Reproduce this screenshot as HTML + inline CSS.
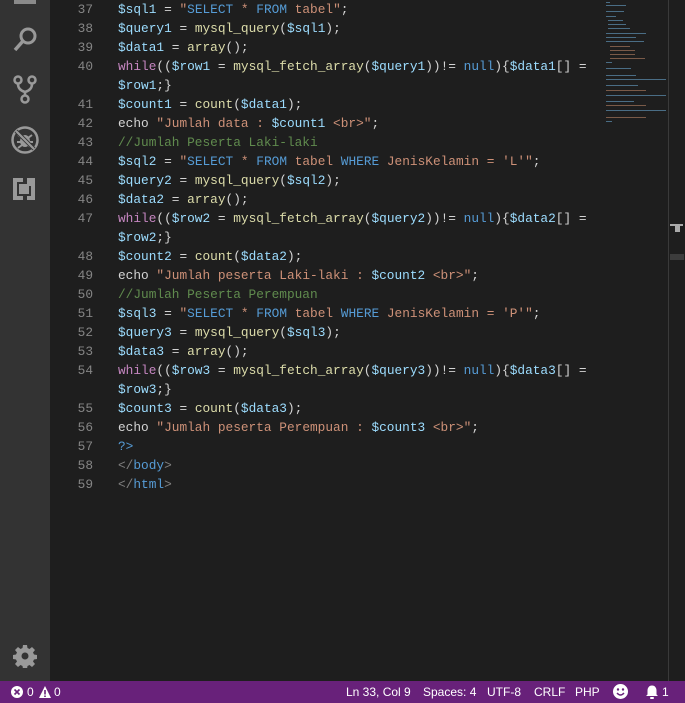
<!DOCTYPE html>
<html><head><style>
body{margin:0;width:685px;height:703px;background:#1e1e1e;overflow:hidden;position:relative;font-family:"Liberation Mono",monospace}
#act{position:absolute;left:0;top:0;width:50px;height:681px;background:#333}
.r{position:absolute;height:19px;line-height:19px;font-size:12.8px;white-space:pre;color:#d4d4d4}
.n{position:absolute;width:40px;left:53px;text-align:right;color:#858585;font-size:12.8px;line-height:19px;height:19px}
.v{color:#9cdcfe}.s{color:#ce9178}.k{color:#569cd6}.p{color:#c586c0}.f{color:#dcdcaa}.c{color:#608b4e}.g{color:#808080}
#status{position:absolute;left:0;top:681px;width:685px;height:22px;background:#68217a;color:#fff;font-family:"Liberation Sans",sans-serif;font-size:12px;line-height:22px}
#status span,#status svg{position:absolute;top:0}
</style></head><body>
<div id="act">
<div style="position:absolute;left:14px;top:-10px;width:22px;height:14px;background:#8a8a8a"></div>
<svg style="position:absolute;left:10px;top:24px" width="30" height="30"><circle cx="18" cy="12" r="7" fill="none" stroke="#999" stroke-width="3"/><line x1="13" y1="17" x2="5" y2="26" stroke="#999" stroke-width="3.5"/></svg>
<svg style="position:absolute;left:10px;top:74px" width="30" height="30"><circle cx="8" cy="6" r="3.5" fill="none" stroke="#999" stroke-width="2.5"/><circle cx="22" cy="6" r="3.5" fill="none" stroke="#999" stroke-width="2.5"/><circle cx="15" cy="25" r="3.5" fill="none" stroke="#999" stroke-width="2.5"/><path d="M8 10 Q8 16 15 18 Q22 16 22 10 M15 18 V21" fill="none" stroke="#999" stroke-width="2.5"/></svg>
<svg style="position:absolute;left:10px;top:125px" width="30" height="30"><circle cx="15" cy="15" r="12.5" fill="none" stroke="#999" stroke-width="2.5"/><ellipse cx="15" cy="16" rx="5" ry="6" fill="#999"/><path d="M8 10l4 3M22 10l-4 3M7 17h4M19 17h4M8 23l4-3M22 23l-4-3" stroke="#999" stroke-width="2"/><line x1="6" y1="6" x2="24" y2="24" stroke="#333" stroke-width="4"/><line x1="6" y1="6" x2="24" y2="24" stroke="#999" stroke-width="2.2"/></svg>
<svg style="position:absolute;left:13px;top:178px" width="24" height="24"><path d="M0 0h10v4H4v14h6v4H0zM14 0h8v22h-8v-4h4V8h-4z" fill="#999"/><rect x="6" y="6" width="10" height="10" fill="#999"/></svg>
<svg style="position:absolute;left:13px;top:644px" width="24" height="24" viewBox="0 0 24 24"><path fill="#999" d="M10 1h4l.5 3 2 1 2.5-2 3 3-2 2.5 1 2 3 .5v4l-3 .5-1 2 2 2.5-3 3-2.5-2-2 1-.5 3h-4l-.5-3-2-1-2.5 2-3-3 2-2.5-1-2-3-.5v-4l3-.5 1-2-2-2.5 3-3 2.5 2 2-1z"/><circle cx="12" cy="12" r="3.5" fill="#333"/></svg>
</div>
<div class="n" style="top:0">37</div><div class="r" style="left:118px;top:0"><span class="v">$sql1</span> = <span class="s">"</span><span class="k">SELECT</span> <span class="s">*</span> <span class="k">FROM</span> <span class="s">tabel"</span>;</div>
<div class="n" style="top:19px">38</div><div class="r" style="left:118px;top:19px"><span class="v">$query1</span> = <span class="f">mysql_query</span>(<span class="v">$sql1</span>);</div>
<div class="n" style="top:38px">39</div><div class="r" style="left:118px;top:38px"><span class="v">$data1</span> = <span class="f">array</span>();</div>
<div class="n" style="top:57px">40</div><div class="r" style="left:118px;top:57px"><span class="p">while</span>((<span class="v">$row1</span> = <span class="f">mysql_fetch_array</span>(<span class="v">$query1</span>))!= <span class="k">null</span>){<span class="v">$data1</span>[] =</div>
<div class="r" style="left:118px;top:76px"><span class="v">$row1</span>;}</div>
<div class="n" style="top:95px">41</div><div class="r" style="left:118px;top:95px"><span class="v">$count1</span> = <span class="f">count</span>(<span class="v">$data1</span>);</div>
<div class="n" style="top:114px">42</div><div class="r" style="left:118px;top:114px">echo <span class="s">"Jumlah data : </span><span class="v">$count1</span><span class="s"> &lt;br&gt;"</span>;</div>
<div class="n" style="top:133px">43</div><div class="r" style="left:118px;top:133px"><span class="c">//Jumlah Peserta Laki-laki</span></div>
<div class="n" style="top:152px">44</div><div class="r" style="left:118px;top:152px"><span class="v">$sql2</span> = <span class="s">"</span><span class="k">SELECT</span> <span class="s">*</span> <span class="k">FROM</span> <span class="s">tabel</span> <span class="k">WHERE</span> <span class="s">JenisKelamin = 'L'"</span>;</div>
<div class="n" style="top:171px">45</div><div class="r" style="left:118px;top:171px"><span class="v">$query2</span> = <span class="f">mysql_query</span>(<span class="v">$sql2</span>);</div>
<div class="n" style="top:190px">46</div><div class="r" style="left:118px;top:190px"><span class="v">$data2</span> = <span class="f">array</span>();</div>
<div class="n" style="top:209px">47</div><div class="r" style="left:118px;top:209px"><span class="p">while</span>((<span class="v">$row2</span> = <span class="f">mysql_fetch_array</span>(<span class="v">$query2</span>))!= <span class="k">null</span>){<span class="v">$data2</span>[] =</div>
<div class="r" style="left:118px;top:228px"><span class="v">$row2</span>;}</div>
<div class="n" style="top:247px">48</div><div class="r" style="left:118px;top:247px"><span class="v">$count2</span> = <span class="f">count</span>(<span class="v">$data2</span>);</div>
<div class="n" style="top:266px">49</div><div class="r" style="left:118px;top:266px">echo <span class="s">"Jumlah peserta Laki-laki : </span><span class="v">$count2</span><span class="s"> &lt;br&gt;"</span>;</div>
<div class="n" style="top:285px">50</div><div class="r" style="left:118px;top:285px"><span class="c">//Jumlah Peserta Perempuan</span></div>
<div class="n" style="top:304px">51</div><div class="r" style="left:118px;top:304px"><span class="v">$sql3</span> = <span class="s">"</span><span class="k">SELECT</span> <span class="s">*</span> <span class="k">FROM</span> <span class="s">tabel</span> <span class="k">WHERE</span> <span class="s">JenisKelamin = 'P'"</span>;</div>
<div class="n" style="top:323px">52</div><div class="r" style="left:118px;top:323px"><span class="v">$query3</span> = <span class="f">mysql_query</span>(<span class="v">$sql3</span>);</div>
<div class="n" style="top:342px">53</div><div class="r" style="left:118px;top:342px"><span class="v">$data3</span> = <span class="f">array</span>();</div>
<div class="n" style="top:361px">54</div><div class="r" style="left:118px;top:361px"><span class="p">while</span>((<span class="v">$row3</span> = <span class="f">mysql_fetch_array</span>(<span class="v">$query3</span>))!= <span class="k">null</span>){<span class="v">$data3</span>[] =</div>
<div class="r" style="left:118px;top:380px"><span class="v">$row3</span>;}</div>
<div class="n" style="top:399px">55</div><div class="r" style="left:118px;top:399px"><span class="v">$count3</span> = <span class="f">count</span>(<span class="v">$data3</span>);</div>
<div class="n" style="top:418px">56</div><div class="r" style="left:118px;top:418px">echo <span class="s">"Jumlah peserta Perempuan : </span><span class="v">$count3</span><span class="s"> &lt;br&gt;"</span>;</div>
<div class="n" style="top:437px">57</div><div class="r" style="left:118px;top:437px"><span class="k">?&gt;</span></div>
<div class="n" style="top:456px">58</div><div class="r" style="left:118px;top:456px"><span class="g">&lt;/</span><span class="k">body</span><span class="g">&gt;</span></div>
<div class="n" style="top:475px">59</div><div class="r" style="left:118px;top:475px"><span class="g">&lt;/</span><span class="k">html</span><span class="g">&gt;</span></div>
<svg style="position:absolute;left:605px;top:0" width="63" height="130">
<g fill="#4a6d85"><rect x="1" y="2" width="4" height="1"/><rect x="1" y="5" width="20" height="1"/><rect x="1" y="11" width="18" height="1"/><rect x="1" y="16" width="10" height="1"/><rect x="3" y="20" width="15" height="1"/><rect x="3" y="24" width="18" height="1"/><rect x="3" y="28" width="22" height="1"/><rect x="1" y="33" width="40" height="1"/><rect x="1" y="37" width="30" height="1"/><rect x="1" y="41" width="38" height="1"/><rect x="1" y="62" width="6" height="1"/><rect x="1" y="68" width="25" height="1"/><rect x="1" y="75" width="30" height="1"/><rect x="1" y="79" width="60" height="1"/><rect x="1" y="85" width="32" height="1"/><rect x="1" y="95" width="60" height="1"/><rect x="1" y="101" width="28" height="1"/><rect x="1" y="110" width="60" height="1"/><rect x="1" y="121" width="6" height="1"/></g>
<g fill="#7a5a48"><rect x="5" y="46" width="20" height="1"/><rect x="5" y="50" width="25" height="1"/><rect x="5" y="54" width="25" height="1"/><rect x="5" y="58" width="35" height="1"/><rect x="1" y="90" width="40" height="1"/><rect x="1" y="105" width="40" height="1"/><rect x="1" y="117" width="40" height="1"/></g>
</svg>
<div style="position:absolute;left:668px;top:0;width:1px;height:681px;background:#3a3a3a"></div>
<div style="position:absolute;left:670px;top:224px;width:13px;height:2px;background:#aaa"></div>
<div style="position:absolute;left:675px;top:226px;width:5px;height:6px;background:#aaa"></div>
<div style="position:absolute;left:670px;top:254px;width:14px;height:6px;background:#3c3c3c"></div>
<div id="status">
<svg style="left:11px;top:5px" width="12" height="12"><circle cx="6" cy="6" r="6" fill="#fff"/><path d="M3.5 3.5l5 5M8.5 3.5l-5 5" stroke="#68217a" stroke-width="1.6"/></svg>
<span style="left:27px">0</span>
<svg style="left:39px;top:5px" width="12" height="12"><path d="M6 0L12 12H0z" fill="#fff"/><rect x="5.2" y="4" width="1.6" height="4.5" fill="#68217a"/><rect x="5.2" y="9.5" width="1.6" height="1.5" fill="#68217a"/></svg>
<span style="left:54px">0</span>
<span style="left:346px">Ln 33, Col 9</span>
<span style="left:423px">Spaces: 4</span>
<span style="left:487px">UTF-8</span>
<span style="left:534px">CRLF</span>
<span style="left:575px">PHP</span>
<svg style="left:613px;top:3px" width="15" height="15"><circle cx="7.5" cy="7.5" r="7.5" fill="#fff"/><circle cx="5" cy="5.5" r="1.2" fill="#68217a"/><circle cx="10" cy="5.5" r="1.2" fill="#68217a"/><path d="M4 9q3.5 4 7 0" stroke="#68217a" stroke-width="1.4" fill="none"/></svg>
<svg style="left:645px;top:4px" width="14" height="15"><path d="M7 0.5c-3 0-4.5 2.5-4.5 5v4L1 11h12l-1.5-1.5v-4c0-2.5-1.5-5-4.5-5z" fill="#fff"/><rect x="5" y="12" width="4" height="2" rx="1" fill="#fff"/></svg>
<span style="left:662px">1</span>
</div>
</body></html>
